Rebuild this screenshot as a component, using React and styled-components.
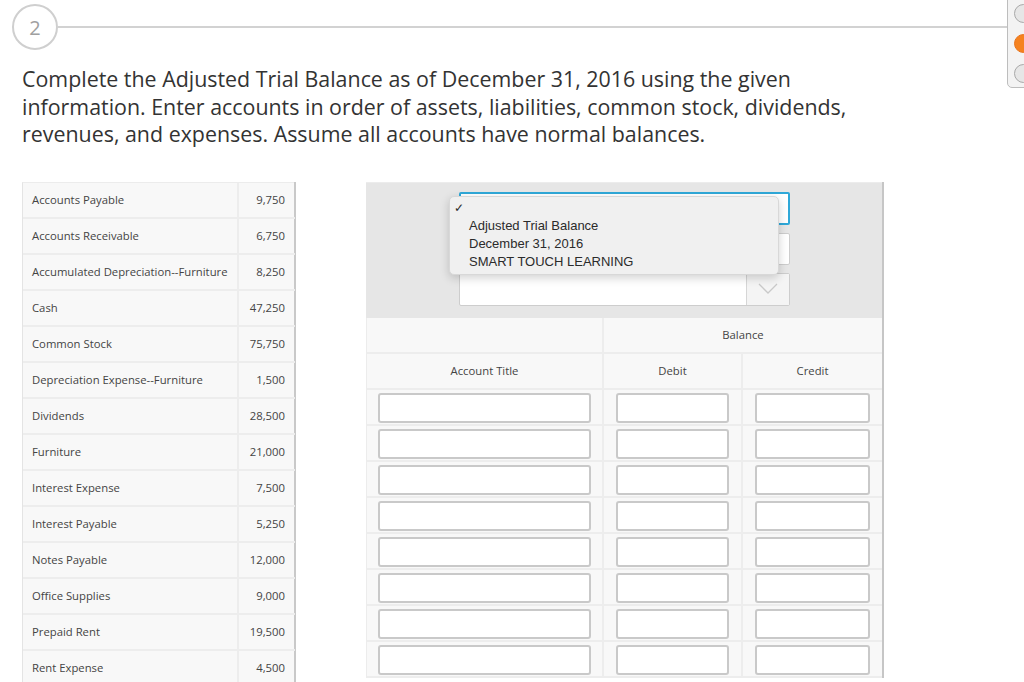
import React from "react";
import styled, { createGlobalStyle } from "styled-components";

const Global = createGlobalStyle`
  html, body { margin: 0; padding: 0; background: #fff; }
  body { font-family: "Open Sans", "Noto Sans", sans-serif; overflow: hidden; }
  * { box-sizing: border-box; }
`;

const Page = styled.div`
  position: relative;
  width: 1024px;
  height: 682px;
  overflow: hidden;
`;

const StepBar = styled.div`
  display: flex;
  align-items: center;
  padding: 4px 0 0 12px;
  width: 1007px;
`;

const StepCircle = styled.div`
  width: 46px;
  height: 46px;
  border: 2px solid #cfcfcf;
  border-radius: 50%;
  display: flex;
  align-items: center;
  justify-content: center;
  color: #a0a0a0;
  font-size: 20px;
  flex: none;
`;

const StepLine = styled.div`
  flex: 1;
  height: 2px;
  background: #d2d2d2;
`;

const SideWidget = styled.div`
  position: absolute;
  top: -2px;
  left: 1007px;
  width: 30px;
  height: 90px;
  background: #f3f3f3;
  border: 1px solid #bdbdbd;
  border-radius: 0 0 0 5px;
  display: flex;
  flex-direction: column;
  align-items: flex-start;
  padding: 5px 0 0 6px;
  gap: 11px;
`;

const Dot = styled.div`
  width: 19px;
  height: 19px;
  border-radius: 50%;
  border: 1px solid ${(p) => (p.$active ? "#e8731c" : "#a8a8a8")};
  background: ${(p) => (p.$active ? "#f5821f" : "#e6e6e6")};
`;

const Prompt = styled.p`
  margin: 15px 0 0 22px;
  width: 860px;
  font-size: 21.4px;
  line-height: 27.5px;
  color: #333;
`;

const Content = styled.div`
  display: flex;
  align-items: flex-start;
  margin-top: 34px;
  padding-left: 22px;
`;

const InfoTable = styled.div`
  width: 272px;
  display: grid;
  grid-template-columns: 216px 56px;
  background: #f8f8f8;
  border-left: 1px solid #e4e4e4;
  border-top: 1px solid #ececec;
  box-shadow: 2px 0 0 #c9c9c9;
`;

const InfoCell = styled.div`
  height: 36px;
  display: flex;
  align-items: center;
  justify-content: ${(p) => (p.$num ? "flex-end" : "flex-start")};
  padding: ${(p) => (p.$num ? "0 10px 0 0" : "0 0 0 9px")};
  font-size: 11.3px;
  color: #444;
  border-bottom: 2px solid #ededed;
  border-right: ${(p) => (p.$num ? "0" : "2px solid #ededed")};
  white-space: nowrap;
`;

const Panel = styled.div`
  position: relative;
  margin-left: 72px;
  width: 516px;
  box-shadow: 2px 0 0 #c6c6c6;
`;

const PanelHead = styled.div`
  height: 136px;
  background: #e6e6e6;
  border-top: 1px solid #ececec;
  display: flex;
  flex-direction: column;
  align-items: center;
  padding-top: 9px;
  gap: 8px;
`;

const Select = styled.div`
  width: 331px;
  height: ${(p) => (p.$h ? p.$h : 33)}px;
  background: #fff;
  border: ${(p) => (p.$focus ? "2px solid #2fa8d8" : "1px solid #cdcdcd")};
  border-radius: 2px;
  display: flex;
  justify-content: flex-end;
`;

const SelectArrow = styled.div`
  width: 43px;
  border-left: 1px solid #d6d6d6;
  background: #f4f4f4;
  display: flex;
  align-items: center;
  justify-content: center;
`;

const Popup = styled.div`
  position: absolute;
  left: 83px;
  top: 14px;
  width: 330px;
  height: 79px;
  background: #f0f0f0;
  border: 1px solid #d8d8d8;
  border-radius: 5px;
  box-shadow: 0 3px 10px rgba(0, 0, 0, 0.18);
  font-family: "Liberation Sans", Arial, sans-serif;
  font-size: 13px;
  color: #2b2b2b;
  padding: 5px 0 0 19px;
`;

const Check = styled.div`
  position: absolute;
  left: 4px;
  top: 4px;
  font-size: 12px;
`;

const PopItem = styled.div`
  line-height: 18px;
  margin-top: ${(p) => (p.$first ? "15px" : "0")};
`;

const Grid = styled.div`
  display: grid;
  grid-template-columns: 238px 139px 139px;
  background: #f8f8f8;
`;

const HeadCell = styled.div`
  grid-column: ${(p) => p.$span || "auto"};
  height: 36px;
  display: flex;
  align-items: center;
  justify-content: center;
  font-size: 11.3px;
  color: #444;
  border-bottom: 2px solid #ededed;
  border-right: ${(p) => (p.$last ? "0" : "2px solid #ededed")};
  border-left: ${(p) => (p.$first ? "1px solid #ececec" : "0")};
`;

const InputCell = styled.div`
  height: 36px;
  display: flex;
  align-items: center;
  padding: 0 ${(p) => p.$pr}px 0 ${(p) => p.$pl}px;
  border-bottom: 2px solid #ededed;
  border-right: ${(p) => (p.$last ? "0" : "2px solid #ededed")};
  border-left: ${(p) => (p.$first ? "1px solid #ececec" : "0")};
`;

const Field = styled.input`
  width: 100%;
  height: 30px;
  border: 2px solid #c9c9c9;
  border-radius: 3px;
  background: #fff;
  margin-top: 2px;
  outline: none;
`;

const accounts = [
  ["Accounts Payable", "9,750"],
  ["Accounts Receivable", "6,750"],
  ["Accumulated Depreciation--Furniture", "8,250"],
  ["Cash", "47,250"],
  ["Common Stock", "75,750"],
  ["Depreciation Expense--Furniture", "1,500"],
  ["Dividends", "28,500"],
  ["Furniture", "21,000"],
  ["Interest Expense", "7,500"],
  ["Interest Payable", "5,250"],
  ["Notes Payable", "12,000"],
  ["Office Supplies", "9,000"],
  ["Prepaid Rent", "19,500"],
  ["Rent Expense", "4,500"],
];

const Chevron = () => (
  <svg width="20" height="12" viewBox="0 0 20 12">
    <path d="M1 1 L10 10 L19 1" fill="none" stroke="#c9c9c9" strokeWidth="1.3" />
  </svg>
);

export default function App() {
  const rows = Array.from({ length: 8 });
  return (
    <Page>
      <Global />
      <StepBar>
        <StepCircle>2</StepCircle>
        <StepLine />
      </StepBar>
      <SideWidget>
        <Dot />
        <Dot $active />
        <Dot />
      </SideWidget>
      <Prompt>
        Complete the Adjusted Trial Balance as of December 31, 2016 using the given
        <br />
        information. Enter accounts in order of assets, liabilities, common stock, dividends,
        <br />
        revenues, and expenses. Assume all accounts have normal balances.
      </Prompt>
      <Content>
        <InfoTable>
          {accounts.map(([n, v]) => (
            <React.Fragment key={n}>
              <InfoCell>{n}</InfoCell>
              <InfoCell $num>{v}</InfoCell>
            </React.Fragment>
          ))}
        </InfoTable>
        <Panel>
          <PanelHead>
            <Select $focus />
            <Select $h={32} />
            <Select>
              <SelectArrow>
                <Chevron />
              </SelectArrow>
            </Select>
          </PanelHead>
          <Popup>
            <Check>✓</Check>
            <PopItem $first>Adjusted Trial Balance</PopItem>
            <PopItem>December 31, 2016</PopItem>
            <PopItem>SMART TOUCH LEARNING</PopItem>
          </Popup>
          <Grid>
            <HeadCell $first />
            <HeadCell $span="2 / span 2" $last>Balance</HeadCell>
            <HeadCell $first>Account Title</HeadCell>
            <HeadCell>Debit</HeadCell>
            <HeadCell $last>Credit</HeadCell>
            {rows.map((_, i) => (
              <React.Fragment key={i}>
                <InputCell $first $pl={11} $pr={11}>
                  <Field aria-label="Account title" />
                </InputCell>
                <InputCell $pl={12} $pr={12}>
                  <Field aria-label="Debit" />
                </InputCell>
                <InputCell $last $pl={12} $pr={12}>
                  <Field aria-label="Credit" />
                </InputCell>
              </React.Fragment>
            ))}
          </Grid>
        </Panel>
      </Content>
    </Page>
  );
}
